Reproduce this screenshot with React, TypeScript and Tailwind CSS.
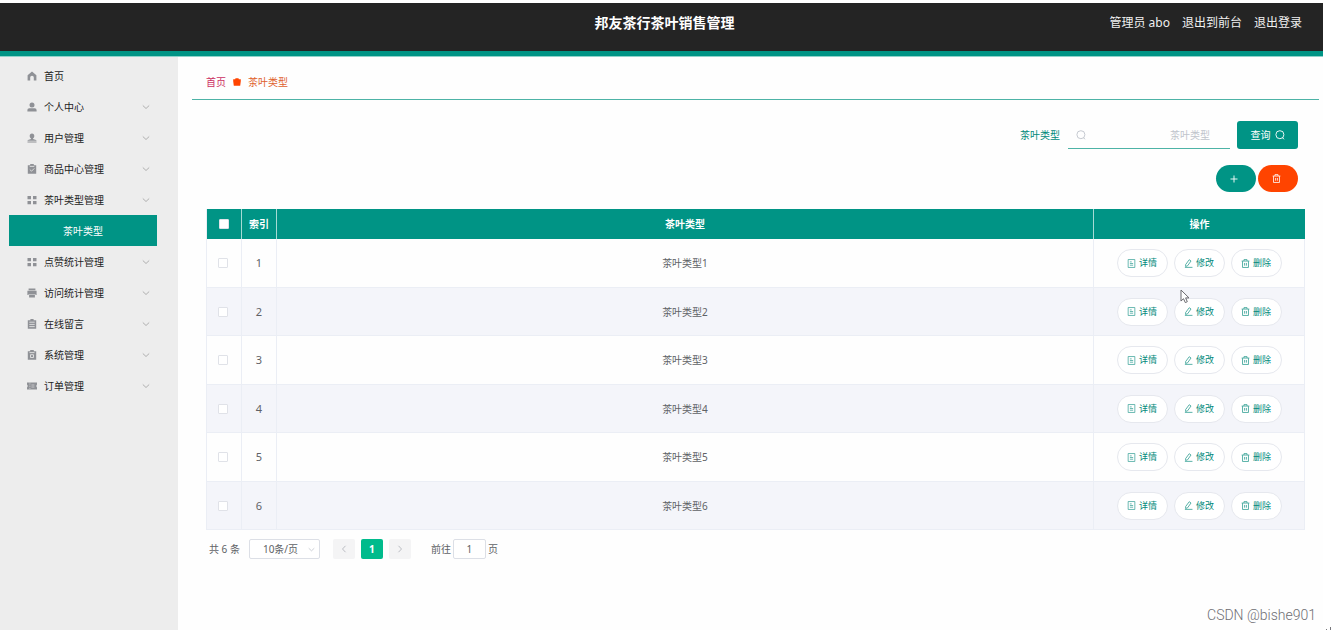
import React from "react";

type IconProps = { className?: string };

const HomeIcon = ({ className }: IconProps) => (
  <svg viewBox="0 0 10 10" className={className} fill="currentColor" aria-hidden="true">
    <path d="M5 .6 9.400 4.200V9.600H6.800V6.600a1.800 1.800 0 0 0-3.600 0V9.600H.6V4.200Z" />
  </svg>
);
const UserIcon = ({ className }: IconProps) => (
  <svg viewBox="0 0 10 10" className={className} fill="currentColor" aria-hidden="true">
    <circle cx="5" cy="2.900" r="2.500" />
    <path d="M.4 9.500V8Q.4 6.200 2.300 6.200H7.700Q9.600 6.200 9.600 8V9.500Z" />
  </svg>
);
const CustomIcon = ({ className }: IconProps) => (
  <svg viewBox="0 0 10 10" className={className} fill="currentColor" aria-hidden="true">
    <path d="M5 .6C6.500.6 7.300 1.700 7.300 3 7.300 4.200 6.800 5 6 5.600V6.100L9 6.900Q9.500 7.100 9.500 7.800H.5Q.5 7.100 1 6.900L4 6.100V5.600C3.200 5 2.700 4.200 2.700 3 2.700 1.700 3.500.6 5 .6ZM.5 8.400H9.500V9.500H.5Z" />
  </svg>
);
const ClaimIcon = ({ className }: IconProps) => (
  <svg viewBox="0 0 10 10" className={className} aria-hidden="true">
    <path d="M.8 1.200H9.200V9.800H.8Z M3.200.1H6.800V2H3.200Z" fill="currentColor" />
    <path d="M2.700 2.400H7.300M2.800 5.500 4.500 7.200 7.300 4.400" fill="none" stroke="#ededed" strokeWidth=".8" />
  </svg>
);
const GridIcon = ({ className }: IconProps) => (
  <svg viewBox="0 0 10 10" className={className} fill="currentColor" aria-hidden="true">
    <path d="M.5 1H4V4.300H.5ZM6 1H9.500V4.300H6ZM.5 6H4V9.300H.5ZM6 6H9.500V9.300H6Z" />
  </svg>
);
const PrinterIcon = ({ className }: IconProps) => (
  <svg viewBox="0 0 10 10" className={className} fill="currentColor" aria-hidden="true">
    <path d="M1.600.6H8.400V2.200H1.600ZM.4 2.700H9.600V7H8.500V6.200H1.500V7H.4ZM2.100 6.700H7.900V9.400H2.100Z" />
  </svg>
);
const OrderIcon = ({ className }: IconProps) => (
  <svg viewBox="0 0 10 10" className={className} aria-hidden="true">
    <path d="M.8 1.200H9.200V9.800H.8Z M3.400.1H6.600V2H3.400Z" fill="currentColor" />
    <path d="M2.300 3.200H7.700M2.300 5.400H7.700M2.300 7.600H7.700" stroke="#ededed" strokeWidth=".8" />
  </svg>
);
const CooperationIcon = ({ className }: IconProps) => (
  <svg viewBox="0 0 10 10" className={className} aria-hidden="true">
    <path d="M.8 1.200H9.200V9.800H.8Z M3.200.1H6.800V2H3.200Z" fill="currentColor" />
    <path d="M2.500 2.600H7.500M3.500 4.700H6.500V7.500H3.500Z" fill="none" stroke="#ededed" strokeWidth=".8" />
  </svg>
);
const TicketIcon = ({ className }: IconProps) => (
  <svg viewBox="0 0 10 10" className={className} aria-hidden="true">
    <path d="M0 1.600H10V3.600Q8.400 5 10 6.400V8.400H0V6.400Q1.600 5 0 3.600Z" fill="currentColor" />
    <path d="M2.900 1.600V8.400" stroke="#ededed" strokeWidth=".6" strokeDasharray="1 .8" />
    <path d="M4.400 4H7.400M4.400 6H7.400" stroke="#ededed" strokeWidth=".6" />
  </svg>
);
const Chevron = ({ className }: IconProps) => (
  <svg viewBox="0 0 8 8" className={className} fill="none" stroke="currentColor" strokeWidth=".9" aria-hidden="true">
    <path d="M.8 2.500 4 5.500 7.200 2.500" />
  </svg>
);
const SearchIcon = ({ className }: IconProps) => (
  <svg viewBox="0 0 10 10" className={className} fill="none" stroke="currentColor" strokeWidth=".9" aria-hidden="true">
    <circle cx="4.900" cy="4.700" r="4" />
    <path d="M7.500 7.500 9 9.300" />
  </svg>
);
const DetailIcon = ({ className }: IconProps) => (
  <svg viewBox="0 0 10 10" className={className} fill="none" stroke="currentColor" strokeWidth=".8" aria-hidden="true">
    <path d="M1.300.6H8.700V9.400H1.300ZM3.200 3.200H5.200M3.200 5H6.800M3.200 6.900H6.800" />
  </svg>
);
const EditIcon = ({ className }: IconProps) => (
  <svg viewBox="0 0 10 10" className={className} fill="none" stroke="currentColor" strokeWidth=".9" aria-hidden="true">
    <path d="M5.800.8 7.800 2.200 4 7.500 1.800 8.300V6.200ZM1 9.300H9.400" />
  </svg>
);
const TrashIcon = ({ className }: IconProps) => (
  <svg viewBox="0 0 10 10" className={className} fill="none" stroke="currentColor" strokeWidth=".9" aria-hidden="true">
    <path d="M.7 2.300H9.300M3.300 2.200V.7H6.700V2.200M1.700 2.400V9.400H8.300V2.400M4 4.400V7.400M6 4.400V7.400" />
  </svg>
);

const menu = [
  { label: "首页", Icon: HomeIcon, open: false, leaf: true },
  { label: "个人中心", Icon: UserIcon, open: false },
  { label: "用户管理", Icon: CustomIcon, open: false },
  { label: "商品中心管理", Icon: ClaimIcon, open: false },
  { label: "茶叶类型管理", Icon: GridIcon, open: true },
  { label: "点赞统计管理", Icon: GridIcon, open: false },
  { label: "访问统计管理", Icon: PrinterIcon, open: false },
  { label: "在线留言", Icon: OrderIcon, open: false },
  { label: "系统管理", Icon: CooperationIcon, open: false },
  { label: "订单管理", Icon: TicketIcon, open: false },
];

const rows = [1, 2, 3, 4, 5, 6].map((id) => ({ id, name: `茶叶类型${id}` }));

const actions = [
  { label: "详情", Icon: DetailIcon },
  { label: "修改", Icon: EditIcon },
  { label: "删除", Icon: TrashIcon },
];

function Header() {
  return (
    <header className="grid h-[53px] grid-cols-[1fr_auto_1fr] items-center border-b-[5px] border-[#009485] bg-[#242424] pr-[21px] pb-2 pl-[27px] text-white">
      <span />
      <h1 className="text-[14px] leading-5 font-bold">邦友茶行茶叶销售管理</h1>
      <nav className="flex justify-end gap-3 text-[12px] leading-5 text-[#f0f0f0]">
        <span>管理员 abo</span>
        <a href="#front">退出到前台</a>
        <a href="#logout">退出登录</a>
      </nav>
    </header>
  );
}

function Sidebar() {
  return (
    <aside className="w-[178px] shrink-0 bg-[#ededed] pt-[3px] pr-[21px] pl-[9px]">
      <ul>
        {menu.map(({ label, Icon, open, leaf }) => (
          <li key={label}>
            <button type="button" className="flex h-[31px] w-full items-center pr-[7px] pl-[18px] text-[#222]">
              <Icon className="mr-[7px] size-[10px] text-[#8f9196]" />
              <span>{label}</span>
              {!leaf && <Chevron className="ml-auto size-2 text-[#a8a8a8]" />}
            </button>
            {open && (
              <a href="#types" className="flex h-[31px] items-center justify-center bg-[#009485] text-white">
                茶叶类型
              </a>
            )}
          </li>
        ))}
      </ul>
    </aside>
  );
}

function Toolbar() {
  return (
    <div className="flex flex-col items-end pr-[7px]">
      <form className="flex items-center" onSubmit={(e) => e.preventDefault()}>
        <label htmlFor="type" className="mr-2 text-[#00897b]">
          茶叶类型
        </label>
        <div className="mr-[7px] flex h-7 w-[162px] items-center border-b border-[#4db3a6] pr-5 pl-2">
          <SearchIcon className="size-[10px] shrink-0 text-[#c0c4cc]" />
          <input
            id="type"
            placeholder="茶叶类型"
            className="w-full min-w-0 bg-transparent text-right outline-none placeholder:text-[#c0c4cc]"
          />
        </div>
        <button
          type="submit"
          className="flex h-7 w-[61px] items-center justify-center gap-1 rounded-[3px] bg-[#009485] text-white"
        >
          查询
          <SearchIcon className="size-[10px]" />
        </button>
      </form>
      <div className="mt-4 flex gap-0.5">
        <button
          type="button"
          aria-label="新增"
          className="flex h-[27px] w-10 items-center justify-center rounded-full bg-[#009485] pr-1 text-white"
        >
          <svg viewBox="0 0 8 8" className="size-2" fill="none" stroke="currentColor" strokeWidth=".9" aria-hidden="true">
            <path d="M4 .5V7.500M.5 4H7.500" />
          </svg>
        </button>
        <button
          type="button"
          aria-label="批量删除"
          className="flex h-[27px] w-10 items-center justify-center rounded-full bg-[#ff4400] pr-1 text-white"
        >
          <TrashIcon className="size-[9px]" />
        </button>
      </div>
    </div>
  );
}

const box =
  "block size-[10px] mx-auto appearance-none rounded-[1px] border border-[#e0e2e8] bg-white checked:bg-[#009485]";

function TypeTable() {
  return (
    <table className="mt-[17px] w-full table-fixed border-separate border-spacing-0 border-l border-[#ebeef5] text-center text-[#606266]">
      <colgroup>
        <col className="w-[35px]" />
        <col className="w-[35px]" />
        <col />
        <col className="w-[211px]" />
      </colgroup>
      <thead>
        <tr className="h-[30px] bg-[#009485] text-white">
          <th className="border-r border-[#a6dbd4]">
            <input type="checkbox" aria-label="全选" className={box} />
          </th>
          <th className="border-r border-[#a6dbd4] font-bold">索引</th>
          <th className="border-r border-[#a6dbd4] font-bold">茶叶类型</th>
          <th className="font-bold">操作</th>
        </tr>
      </thead>
      <tbody>
        {rows.map(({ id, name }) => (
          <tr key={id} className="odd:h-[49px] even:h-12 even:bg-[#f4f5fa]">
            <td className="border-r border-b border-[#ebeef5] pr-[2px]">
              <input type="checkbox" aria-label={`选择${name}`} className={box} />
            </td>
            <td className="border-r border-b border-[#ebeef5] text-[11px]">{id}</td>
            <td className="border-r border-b border-[#ebeef5]">{name}</td>
            <td className="border-r border-b border-[#ebeef5]">
              <div className="flex justify-center gap-[6px]">
                {actions.map(({ label, Icon }) => (
                  <button
                    key={label}
                    type="button"
                    className="flex h-7 w-[51px] items-center justify-center gap-[3px] rounded-full border border-[#e6e8ee] bg-white text-[9px] text-[#00897b]"
                  >
                    <Icon className="size-[9px] opacity-80" />
                    {label}
                  </button>
                ))}
              </div>
            </td>
          </tr>
        ))}
      </tbody>
    </table>
  );
}

function Pagination() {
  return (
    <div className="mt-[9px] flex items-center pl-[3px] text-[#606266]">
      <span>共 6 条</span>
      <div className="ml-[9px] grid h-5 w-[71px] items-center rounded-[2px] border border-[#dcdfe6] bg-white">
        <select
          aria-label="每页条数"
          className="col-start-1 row-start-1 w-full appearance-none bg-transparent pl-[13px] outline-none"
        >
          <option>10条/页</option>
        </select>
        <Chevron className="pointer-events-none col-start-1 row-start-1 mr-1 size-[7px] justify-self-end text-[#c0c4cc]" />
      </div>
      <div className="ml-[13px] flex gap-[6px]">
        <button
          type="button"
          aria-label="上一页"
          className="flex h-5 w-[22px] items-center justify-center rounded-[2px] bg-[#f4f4f5] text-[#b4b7bd]"
        >
          <Chevron className="size-2 rotate-90" />
        </button>
        <button type="button" className="h-5 w-[22px] rounded-[2px] bg-[#00bb8c] font-bold text-white">
          1
        </button>
        <button
          type="button"
          aria-label="下一页"
          className="flex h-5 w-[22px] items-center justify-center rounded-[2px] bg-[#f4f4f5] text-[#b4b7bd]"
        >
          <Chevron className="size-2 -rotate-90" />
        </button>
      </div>
      <label htmlFor="page" className="ml-5">
        前往
      </label>
      <input
        id="page"
        defaultValue="1"
        className="mx-[2px] h-5 w-[33px] rounded-[2px] border border-[#dcdfe6] bg-white text-center outline-none"
      />
      <span>页</span>
    </div>
  );
}

export default function App() {
  return (
    <div className="relative flex min-h-screen flex-col overflow-hidden bg-white pt-[3px] pr-2 font-['Noto_Sans','Noto_Sans_CJK_SC',sans-serif] text-[10px] leading-4">
      <Header />
      <div className="flex flex-1 border-t border-[#8fd2ca]">
        <Sidebar />
        <main className="min-w-0 flex-1 bg-[#fefefe] pr-1 pl-[14px]">
          <nav className="flex h-[43px] items-center border-b border-[#4db3a6] pt-2 pl-[14px]">
            <a href="#home" className="text-[#cc2f62]">
              首页
            </a>
            <svg viewBox="0 0 8 8" className="mx-[7px] size-2" fill="#ff4400" aria-hidden="true">
              <path d="M2.500.3H5.500L5.800 1.200H7.800V3.200L7.200 7.800H.8L.2 3.200V1.200H2.200Z" />
            </svg>
            <span className="text-[#e0602c]">茶叶类型</span>
          </nav>
          <div className="pt-[21px] pr-[14px] pl-[14px]">
            <Toolbar />
            <TypeTable />
            <Pagination />
          </div>
        </main>
      </div>
      <svg viewBox="0 0 12 16" className="pointer-events-none absolute top-[289px] left-[1180px] h-4 w-3" aria-hidden="true">
        <path
          d="M1 1V12L3.500 9.700 5.300 13.600 7.300 12.700 5.600 8.900H9Z"
          fill="#fff"
          stroke="#6b6b70"
          strokeWidth="1"
        />
      </svg>
      <span className="absolute right-[15px] bottom-[5px] font-[Roboto,sans-serif] text-[14px] leading-5 font-light text-[#6f6f74]">
        CSDN @bishe901
      </span>
      <svg viewBox="0 0 5 3" className="absolute right-0 bottom-0 h-[3px] w-[5px]" fill="#77777c" aria-hidden="true">
        <path d="M0 2H1V3H0ZM4 0H5V3H4Z" />
      </svg>
    </div>
  );
}
